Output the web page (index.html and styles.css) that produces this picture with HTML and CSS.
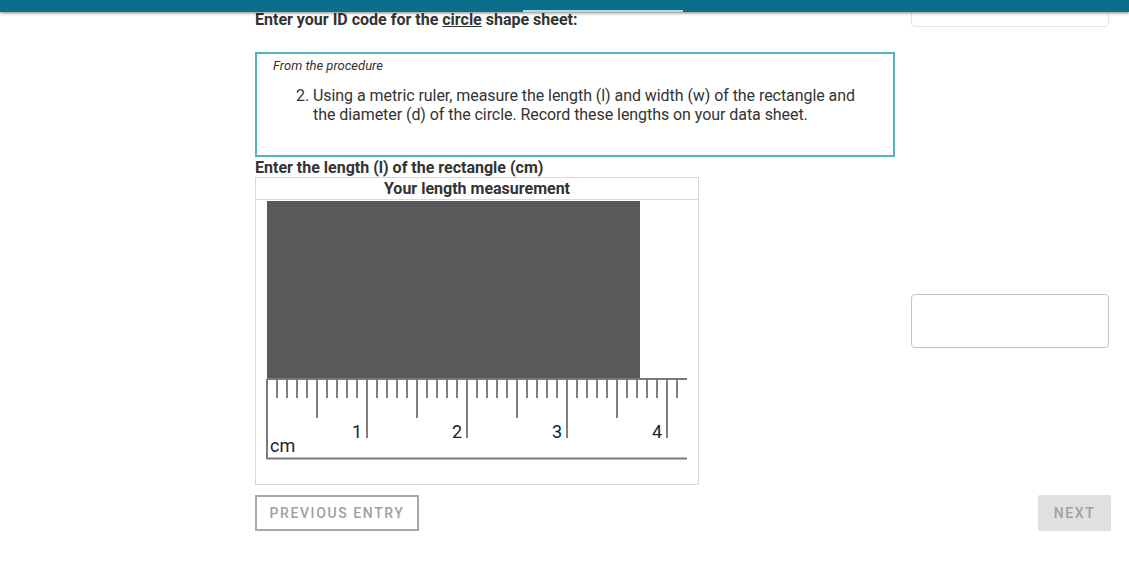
FILE: index.html
```html
<!DOCTYPE html>
<html lang="en">
<head>
    <meta charset="UTF-8">
    <meta name="viewport" content="width=device-width, initial-scale=1.0">
    <title>Measurement Entry</title>
    <link rel="stylesheet" href="styles.css">
</head>
<body>
    <header class="topbar">
        <div class="tab-indicator"></div>
    </header>

    <main class="page">
        <section class="main-col">
            <p class="prompt">Enter your ID code for the <u>circle</u> shape sheet:</p>

            <div class="procedure">
                <div class="procedure-label">From the procedure</div>
                <ol start="2">
                    <li>Using a metric ruler, measure the length (l) and width (w) of the rectangle and the diameter (d) of the circle. Record these lengths on your data sheet.</li>
                </ol>
            </div>

            <p class="prompt prompt-length">Enter the length (l) of the rectangle (cm)</p>

            <div class="measure-panel">
                <div class="panel-title">Your length measurement</div>
                <svg class="ruler" id="ruler" width="442" height="284" viewBox="0 0 442 284">
                    <rect x="11" y="1" width="373" height="178" fill="#59595b"></rect>
                </svg>
            </div>
        </section>

        <aside class="side-col">
            <input type="text" class="answer answer-top">
            <input type="text" class="answer answer-length">
        </aside>

        <nav class="nav-row">
            <button class="btn-prev">Previous entry</button>
            <button class="btn-next">Next</button>
        </nav>
    </main>

    <script>
        // draw the ruler ticks (10px per mm)
        const svg = document.getElementById('ruler');
        const ns = 'http://www.w3.org/2000/svg';
        const rulerLeft = 11;
        const rulerTop = 179;

        function line(x1, y1, x2, y2, color) {
            const l = document.createElementNS(ns, 'line');
            l.setAttribute('x1', x1);
            l.setAttribute('y1', y1);
            l.setAttribute('x2', x2);
            l.setAttribute('y2', y2);
            l.setAttribute('stroke', color);
            l.setAttribute('stroke-width', 2);
            svg.appendChild(l);
        }

        function label(x, y, text, anchor) {
            const t = document.createElementNS(ns, 'text');
            t.setAttribute('x', x);
            t.setAttribute('y', y);
            t.setAttribute('text-anchor', anchor);
            t.setAttribute('font-size', '18');
            t.setAttribute('class', 'ruler-label');
            t.textContent = text;
            svg.appendChild(t);
        }

        for (let k = 1; k <= 41; k++) {
            const x = rulerLeft + k * 10;
            let len = 19;
            if (k % 10 === 0) len = 59;
            else if (k % 5 === 0) len = 39;
            line(x, rulerTop, x, rulerTop + len, '#808080');
            if (k % 10 === 0) label(x - 5, 238, String(k / 10), 'end');
        }

        line(rulerLeft, rulerTop, 431, rulerTop, '#7a7a7a');
        line(rulerLeft, rulerTop, rulerLeft, 259, '#7a7a7a');
        line(rulerLeft, 258.5, 431, 258.5, '#7a7a7a');
        label(14, 252, 'cm', 'start');
    </script>
</body>
</html>
```

FILE: styles.css
```css
* {
    margin: 0;
    padding: 0;
    box-sizing: border-box;
}

body {
    font-family: Roboto, 'Liberation Sans', sans-serif;
    color: #333;
    background: #fff;
    overflow: hidden;
}

.topbar {
    position: fixed;
    top: 0;
    left: 0;
    right: 0;
    height: 12px;
    background-color: #0a6f8b;
    box-shadow: 0 1px 3px rgba(0, 0, 0, 0.5);
    z-index: 10;
}

.tab-indicator {
    position: absolute;
    left: 523px;
    bottom: 0;
    width: 160px;
    height: 2px;
    background-color: #a9dbee;
}

.page {
    display: grid;
    grid-template-columns: 640px 198px;
    column-gap: 16px;
    padding: 10px 0 0 255px;
}

.prompt {
    font-size: 16px;
    font-weight: bold;
    line-height: 20px;
    color: #333;
}

.prompt-length {
    line-height: 19px;
    padding-top: 1px;
}

.procedure {
    margin-top: 22px;
    border: 2px solid #55b1bc;
    padding: 4px 16px 31px 16px;
}

.procedure-label {
    font-size: 13px;
    font-style: italic;
    line-height: 16px;
    color: #333;
}

.procedure ol {
    margin-top: 12px;
    padding-left: 40px;
    font-size: 16px;
    line-height: 19px;
    letter-spacing: -0.06px;
    color: #333;
}

.measure-panel {
    width: 444px;
    border: 1px solid #d9d9cc;
}

.panel-title {
    height: 22px;
    line-height: 21px;
    text-align: center;
    font-size: 16px;
    font-weight: bold;
    border-bottom: 1px solid #d9d9cc;
}

.ruler {
    display: block;
}

.ruler-label {
    font-family: Roboto, 'Liberation Sans', sans-serif;
    font-size: 18px;
    fill: #222;
}

.side-col {
    display: flex;
    flex-direction: column;
    margin-top: -37px;
}

.answer {
    width: 198px;
    height: 54px;
    border: 1px solid #c4c4c4;
    border-radius: 4px;
    font-size: 16px;
    padding: 0 12px;
}

.answer-top {
    border-color: #e4e4e4;
}

.answer-length {
    margin-top: 267px;
}

.nav-row {
    grid-column: 1 / 3;
    display: flex;
    justify-content: space-between;
    margin-top: 10px;
    margin-right: -2px;
}

.nav-row button {
    height: 36px;
    font-family: Roboto, 'Liberation Sans', sans-serif;
    font-size: 14px;
    font-weight: 500;
    letter-spacing: 1.6px;
    text-transform: uppercase;
    color: #a0a0a0;
    cursor: pointer;
}

.btn-prev {
    width: 164px;
    background: #fff;
    border: 2px solid #a8a8a8;
}

.btn-next {
    width: 73px;
    background: #e0e0e0;
    border: none;
    border-radius: 2px;
}
```
